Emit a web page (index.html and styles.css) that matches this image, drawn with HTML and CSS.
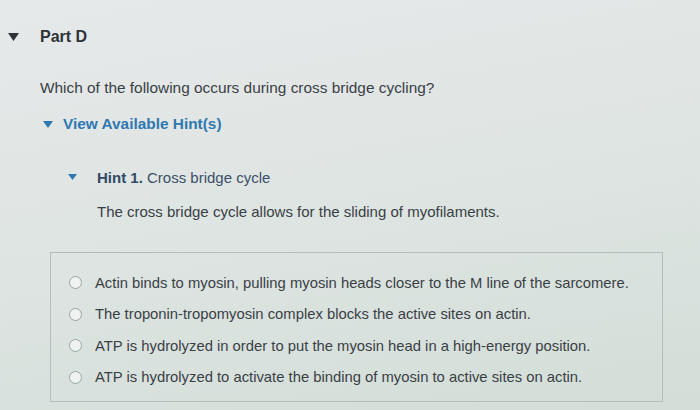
FILE: index.html
```html
<!DOCTYPE html>
<html>
<head>
<meta charset="utf-8">
<link rel="stylesheet" href="styles.css">
</head>
<body>
<div class="page">
  <div class="part-head">
    <svg class="tri tri-dark" width="11" height="8" viewBox="0 0 11 8"><path d="M0 0 H11 L5.5 8 Z"/></svg>
    <span class="part-title">Part D</span>
  </div>
  <p class="question">Which of the following occurs during cross bridge cycling?</p>
  <div class="hint-toggle">
    <svg class="tri tri-blue" width="10" height="7" viewBox="0 0 10 7"><path d="M0 0 H10 L5 7 Z"/></svg>
    <span class="hint-link">View Available Hint(s)</span>
  </div>
  <div class="hint">
    <div class="hint-head">
      <svg class="tri tri-blue" width="9" height="6" viewBox="0 0 9 6"><path d="M0 0 H9 L4.5 6 Z"/></svg>
      <span><b class="hint-num">Hint 1.</b> Cross bridge cycle</span>
    </div>
    <p class="hint-body">The cross bridge cycle allows for the sliding of myofilaments.</p>
  </div>
  <div class="options">
    <label class="option"><span class="radio"></span><span>Actin binds to myosin, pulling myosin heads closer to the M line of the sarcomere.</span></label>
    <label class="option"><span class="radio"></span><span>The troponin-tropomyosin complex blocks the active sites on actin.</span></label>
    <label class="option"><span class="radio"></span><span>ATP is hydrolyzed in order to put the myosin head in a high-energy position.</span></label>
    <label class="option"><span class="radio"></span><span>ATP is hydrolyzed to activate the binding of myosin to active sites on actin.</span></label>
  </div>
</div>
</body>
</html>
```
FILE: styles.css
```css
html, body {
  margin: 0;
  padding: 0;
}
body {
  width: 700px;
  height: 410px;
  overflow: hidden;
  background: linear-gradient(170deg, #e6e9ea 0%, #dfe5e3 45%, #d3ded8 100%);
  font-family: "Liberation Sans", Arial, sans-serif;
  color: #3a3f45;
}
.page {
  padding-top: 27px;
}
.part-head {
  display: flex;
  align-items: center;
  height: 20px;
}
.tri-dark {
  fill: #2f3236;
  margin-left: 8px;
  margin-right: 21px;
}
.tri-blue {
  fill: #2f78b0;
}
.part-title {
  font-weight: bold;
  font-size: 16px;
  color: #2e3338;
}
.question {
  margin: 31px 0 0 40px;
  font-size: 15.4px;
  line-height: 20px;
}
.hint-toggle {
  display: flex;
  align-items: center;
  margin: 16px 0 0 43px;
  height: 20px;
}
.hint-toggle .tri {
  margin-right: 10px;
}
.hint-link {
  color: #2f78b0;
  font-weight: bold;
  font-size: 15.4px;
}
.hint {
  margin: 33px 0 0 68px;
}
.hint-head {
  display: flex;
  align-items: center;
  height: 20px;
  font-size: 15px;
}
.hint-head .tri {
  margin-right: 20px;
}
.hint-num {
  color: #2e4a66;
}
.hint-head span {
  color: #3b5068;
}
.hint-body {
  margin: 15px 0 0 29px;
  font-size: 15px;
  line-height: 20px;
}
.options {
  margin: 30px 0 0 50px;
  width: 613px;
  height: 150px;
  box-sizing: border-box;
  border: 1px solid #b4bdba;
  padding: 19.5px 0 0 18px;
  display: flex;
  flex-direction: column;
  gap: 11.5px;
}
.option {
  display: flex;
  align-items: center;
  height: 20px;
  font-size: 14.8px;
}
.radio {
  width: 11px;
  height: 11px;
  border: 1px solid #99a5a3;
  border-radius: 50%;
  background: #eef2f0;
  margin-right: 13px;
  flex: none;
}
```
